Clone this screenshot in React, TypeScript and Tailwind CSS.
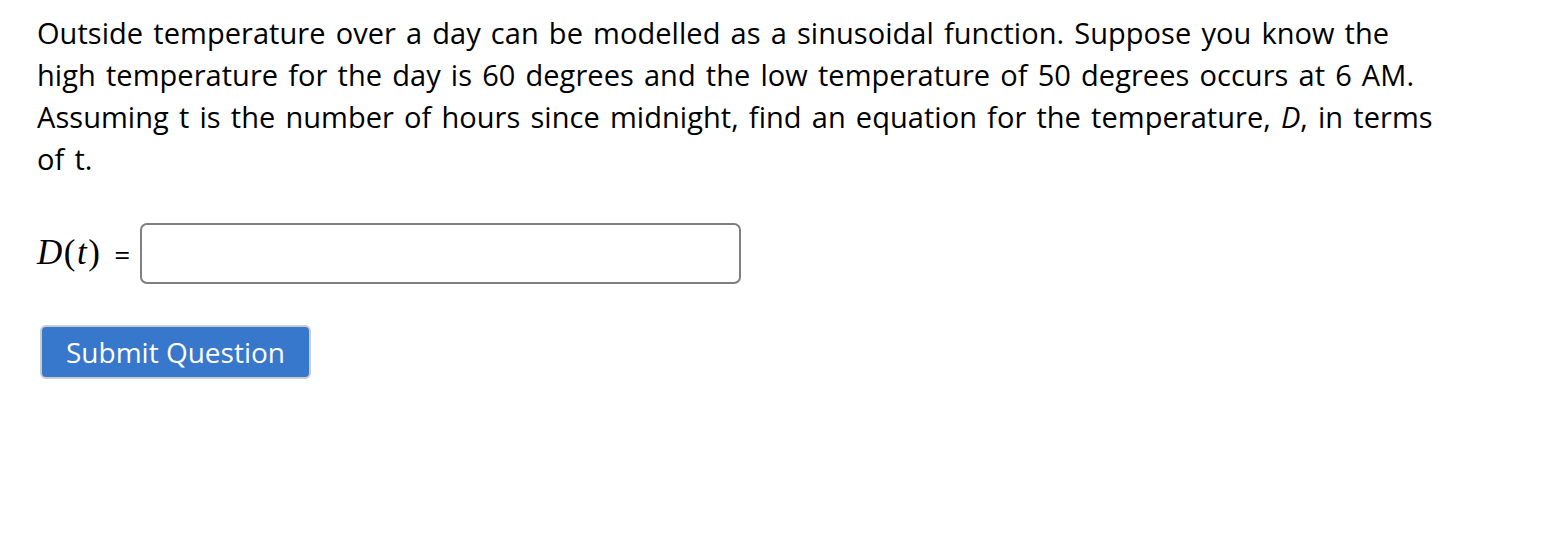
import React from 'react';

const App: React.FC = () => {
  return (
    <div className="min-h-[554px] w-[1556px] bg-white pl-[37px] pt-[12px] text-black" style={{ fontFamily: '"Open Sans", sans-serif' }}>
      <p className="w-[1410px] text-[29px] leading-[42px] tracking-[0.05px] [word-spacing:2.5px]">
        Outside temperature over a day can be modelled as a sinusoidal function. Suppose you know the high temperature for the day is 60 degrees and the low temperature of 50 degrees occurs at 6 AM. Assuming t is the number of hours since midnight, find an equation for the temperature, <i>D</i>, in terms of t.
      </p>

      {/* Answer row */}
      <div className="mt-[43px] flex items-center">
        <span className="text-[35px] italic tracking-[1.5px]" style={{ fontFamily: '"Liberation Serif", serif' }}>
          D<span className="not-italic">(</span>t<span className="not-italic">)</span>
        </span>
        <span className="ml-[13px] mr-[10px] text-[28px]">=</span>
        <input
          type="text"
          className="h-[61px] w-[601px] rounded-[7px] border-2 border-[#7f7f7f] bg-white px-3 text-[27px] outline-none"
        />
      </div>

      <button
        type="button"
        className="ml-[3px] mt-[41px] h-[54px] w-[271px] rounded-[6px] border-2 border-[#cbcbcb] bg-[#3777cc] text-[28px] text-white"
      >
        Submit Question
      </button>
    </div>
  );
};

export default App;
